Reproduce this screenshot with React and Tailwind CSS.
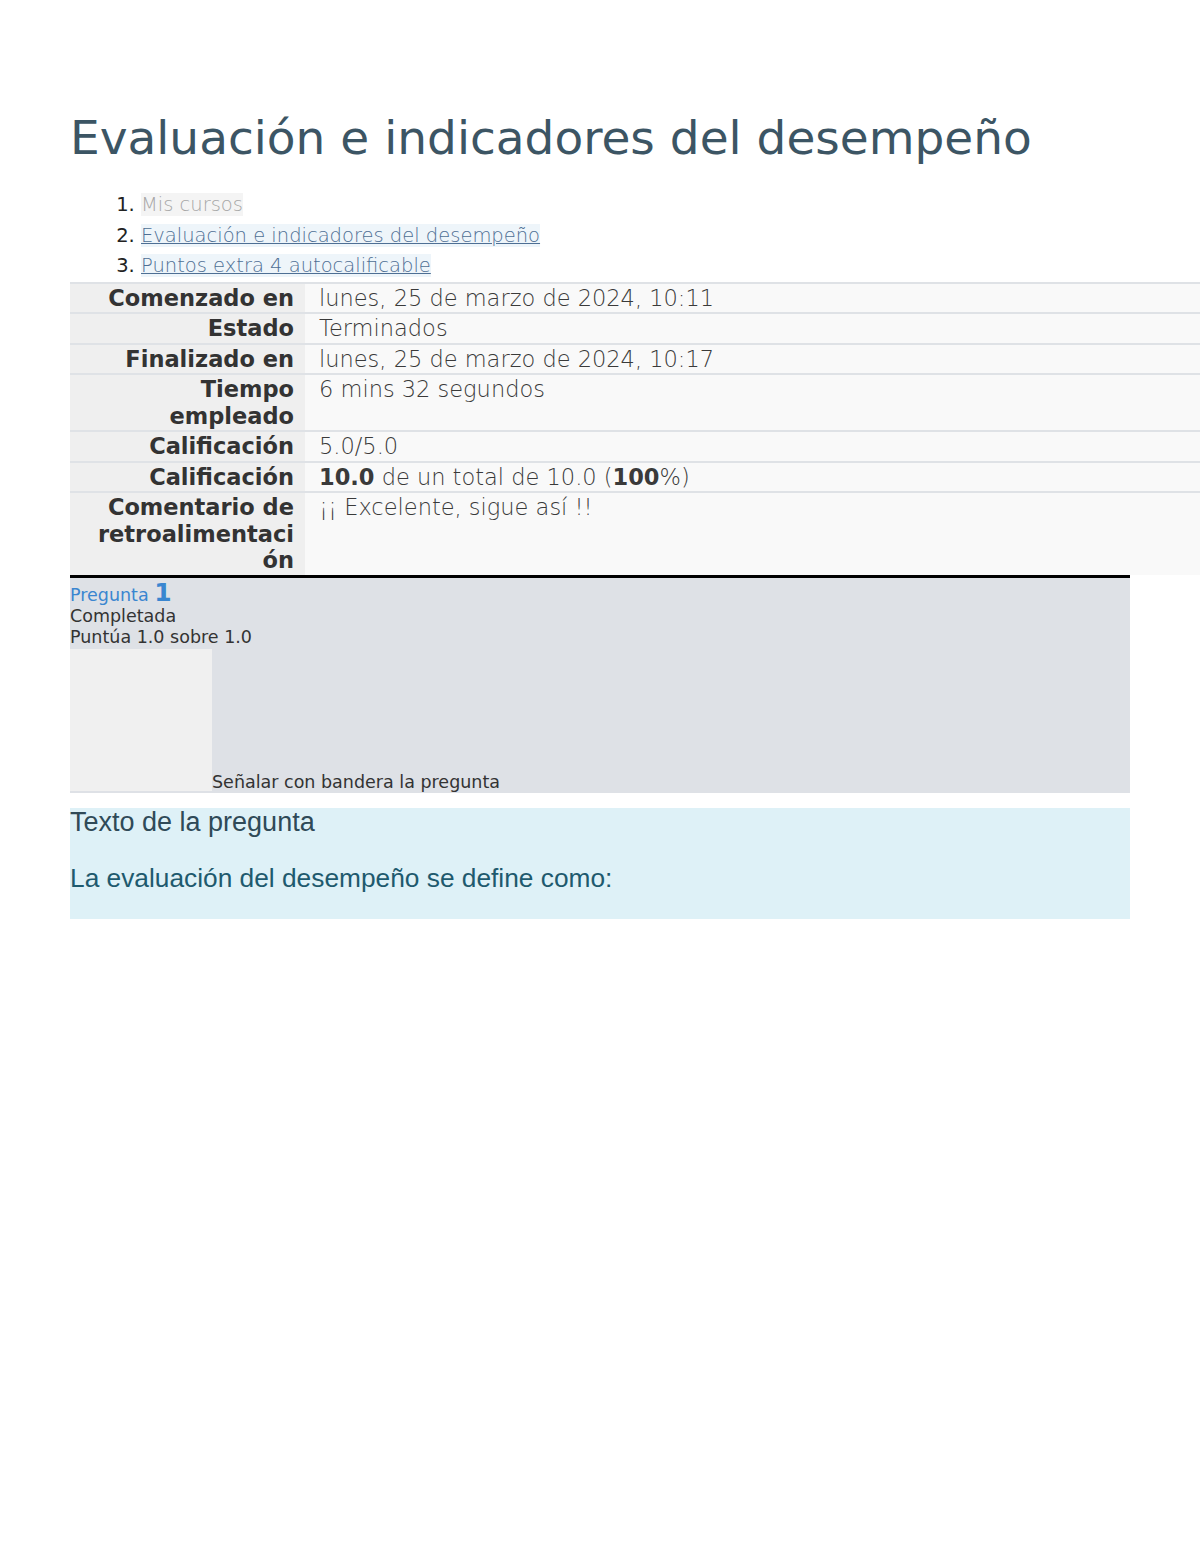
export default function App() {

    const rows = [
        { label: ["Comenzado en"], value: "lunes, 25 de marzo de 2024, 10:11" },
        { label: ["Estado"], value: "Terminados" },
        { label: ["Finalizado en"], value: "lunes, 25 de marzo de 2024, 10:17" },
        { label: ["Tiempo", "empleado"], value: "6 mins 32 segundos" },
        { label: ["Calificación"], value: "5.0/5.0" },
        {
            label: ["Calificación"],
            value: (
                <>
                    <b className="font-bold">10.0</b> de un total de 10.0 (<b className="font-bold">100</b>%)
                </>
            )
        },
        { label: ["Comentario de", "retroalimentaci", "ón"], value: "¡¡ Excelente, sigue así !!" }
    ]

    return (
        <div
            className="bg-white min-h-[1553px] w-[1200px] overflow-hidden pl-[70px]"
            style={{ fontFamily: '"DejaVu Sans", sans-serif' }}
        >

            <h1 className="pt-[108px] text-[47px] leading-[60px] text-[#3c5564] font-normal">
                Evaluación e indicadores del desempeño
            </h1>

            <ol className="list-decimal pl-[71px] mt-[22px] text-[19.5px] leading-[30.5px] text-[#222]">
                <li>
                    <span className="bg-[#f4f4f4] text-[#a6a6a6] font-extralight">Mis cursos</span>
                </li>
                <li>
                    <a className="bg-[#eef5fa] text-[#4e6f94] underline font-extralight">
                        Evaluación e indicadores del desempeño
                    </a>
                </li>
                <li>
                    <a className="bg-[#eef5fa] text-[#4e6f94] underline font-extralight">
                        Puntos extra 4 autocalificable
                    </a>
                </li>
            </ol>

            <div className="w-[1130px]">
                {rows.map((row, i) => (
                    <div key={i} className="flex border-t-[2px] border-[#dfe2e6]">
                        <div className="w-[235px] shrink-0 bg-[#efefef] text-right pr-[11px] py-[1px] text-[22.5px] leading-[26.5px] font-bold text-[#333]">
                            {row.label.map((l, j) => (
                                <div key={j}>{l}</div>
                            ))}
                        </div>
                        <div className="flex-1 bg-[#f9f9f9] pl-[14px] py-[1px] text-[22.5px] leading-[26.5px] text-[#3a3a3a] font-extralight">
                            {row.value}
                        </div>
                    </div>
                ))}
            </div>

            <div className="w-[1060px] border-t-[3px] border-black bg-[#dee1e6] text-[17.5px] leading-[21px] text-[#333]">
                <div className="pt-[4px]">
                    <span className="text-[#3a86d0]">Pregunta </span>
                    <span className="text-[#3a86d0] text-[25px] font-bold leading-[21px]">1</span>
                </div>
                <div>Completada</div>
                <div>Puntúa 1.0 sobre 1.0</div>
                <div className="flex items-end pb-[2px] pt-[1px]">
                    <div className="w-[142px] h-[142px] bg-[#f0f0f0]"></div>
                    <div className="leading-[18px]">Señalar con bandera la pregunta</div>
                </div>
            </div>

            <div
                className="w-[1060px] mt-[15px] bg-[#def1f7] h-[111px]"
                style={{ fontFamily: '"Liberation Sans", sans-serif' }}
            >
                <div className="text-[27px] leading-[28px] text-[#2f4a58]">Texto de la pregunta</div>
                <div className="mt-[28px] text-[26.3px] leading-[28px] text-[#1e5a6e]">
                    La evaluación del desempeño se define como:
                </div>
            </div>

        </div>
    )
}
